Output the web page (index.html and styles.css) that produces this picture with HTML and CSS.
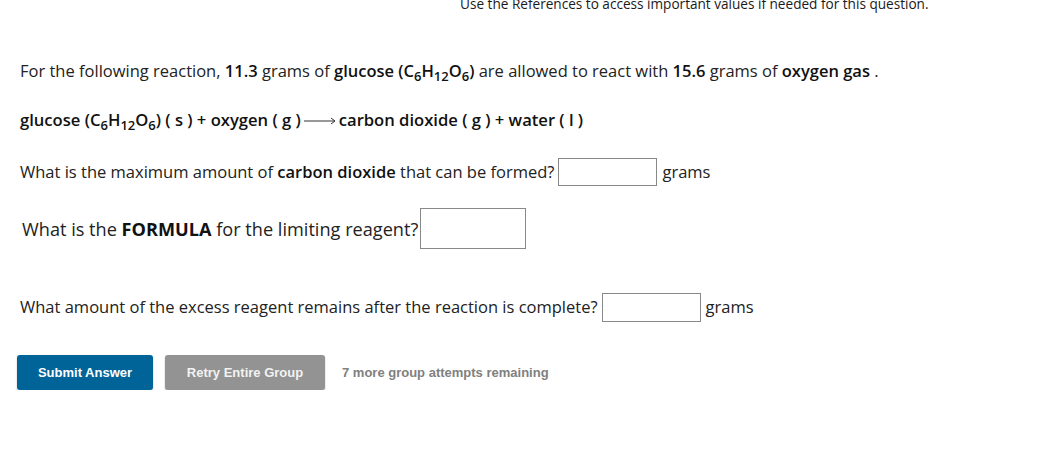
FILE: index.html
```html
<!DOCTYPE html>
<html>
<head>
<meta charset="utf-8">
<link rel="stylesheet" href="styles.css">
</head>
<body>
<div class="refs">Use the References to access important values if needed for this question.</div>
<div class="content">
  <p class="intro">For the following reaction, <b>11.3</b> grams of <b>glucose (C<sub>6</sub>H<sub>12</sub>O<sub>6</sub>)</b> are allowed to react with <b>15.6</b> grams of <b>oxygen gas</b> .</p>
  <p class="eq">glucose (C<sub>6</sub>H<sub>12</sub>O<sub>6</sub>) ( s ) + oxygen ( g )<svg class="arrow" width="34" height="10" viewBox="0 0 34 10"><path d="M1 5H32M28 2L32 5L28 8" fill="none" stroke="#333" stroke-width="1"/></svg>carbon dioxide ( g ) + water ( l )</p>
  <div class="q q1"><span class="qt">What is the maximum amount of <b>carbon dioxide</b> that can be formed?</span><span class="box b1"></span><span class="unit">grams</span></div>
  <div class="q q2"><span class="qt">What is the <b class="strong">FORMULA</b> for the limiting reagent?</span><span class="box b2"></span></div>
  <div class="q q3"><span class="qt">What amount of the excess reagent remains after the reaction is complete?</span><span class="box b3"></span><span class="unit">grams</span></div>
  <div class="actions">
    <button class="btn submit">Submit Answer</button>
    <button class="btn retry">Retry Entire Group</button>
    <span class="remain">7 more group attempts remaining</span>
  </div>
</div>
</body>
</html>
```
FILE: styles.css
```css
html, body { margin: 0; padding: 0; background: #fff; }
body { font-family: "Open Sans", sans-serif; color: #222; }
.refs { font-size: 13.6px; line-height: 14px; margin-top: -3px; padding-left: 460px; color: #1a1a1a; }
.content { padding-left: 20px; }
p { margin: 0; }
b { font-weight: 600; color: #111; }
b.strong { font-weight: 700; }
sub { font-size: 13px; vertical-align: -4px; line-height: 0; }
.intro { font-size: 16.5px; margin-top: 48px; line-height: 24px; }
.eq { font-size: 16.6px; font-weight: 600; margin-top: 25px; line-height: 24px; color: #111; }
.arrow { vertical-align: middle; margin: 0 2px 2px 2px; }
.q { display: flex; align-items: center; font-size: 16.5px; }
.qt, .unit { padding-bottom: 2px; }
.q1 { margin-top: 26px; }
.q2 { margin-top: 22px; padding-left: 2px; font-size: 18.15px; }
.q2 .qt { padding-bottom: 0; }
.q3 { margin-top: 44px; }
.box { display: inline-block; border: 1px solid #888; background: #fff; box-sizing: border-box; margin-left: 3px; }
.b1 { width: 99px; height: 28px; margin-left: 4px; }
.b2 { width: 106px; height: 41px; margin-left: 2px; }
.b3 { width: 99px; height: 29px; margin-left: 4px; }
.unit { margin-left: 5px; }
.actions { display: flex; align-items: center; margin-top: 33px; margin-left: -3px; }
.btn { font-family: "Liberation Sans", Arial, sans-serif; font-weight: 700; font-size: 13px; color: #fff; border: none; border-radius: 3px; height: 35px; padding: 0; box-shadow: 0 1px 2px rgba(0,0,0,0.25); }
.submit { background: #006499; width: 136px; }
.retry { background: #939393; width: 160px; margin-left: 12px; color: #f2f2f2; }
.remain { margin-left: 17px; font-family: "Liberation Sans", Arial, sans-serif; font-weight: 700; font-size: 13px; color: #808080; }
```
